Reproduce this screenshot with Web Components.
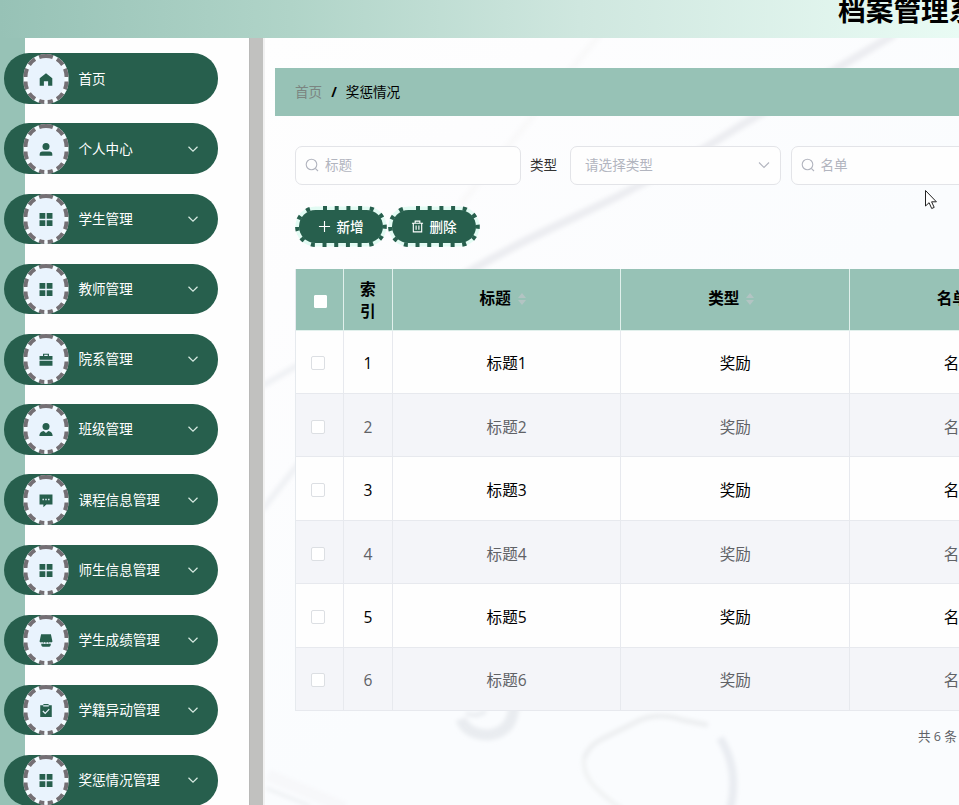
<!DOCTYPE html>
<html lang="zh-CN">
<head>
<meta charset="utf-8">
<title>档案管理系统</title>
<style>
  html, body {
    margin: 0;
    height: 805px;
    overflow: hidden;
  }
  body {
    font-family: "Open Sans", "Noto Sans CJK SC", sans-serif;
    background: #fff;
  }
</style>
</head>
<body>
<archive-app></archive-app>
<script>
  const ICONS = {
    home: '<path d="M8 .8 .8 6.600V15H5.600V10h4.800v5h4.800V6.600z"/>',
    user: '<circle cx="8" cy="4.6" r="4"/><path d="M.8 15v-1.600Q.8 10.400 4 10.400h8q3.200 0 3.200 3V15z"/>',
    grid: '<path d="M.6.6h6.600v6.600H.6zM8.800.6h6.600v6.600H8.800zM.6 8.800h6.600v6.600H.6zM8.800 8.800h6.600v6.600H8.800z"/>',
    case: '<path d="M4.6 4V1.5h6.8V4H15.400v4.400H.6V4zM6 4h4V2.700H6zM.6 9.500h14.800V15H.6z" fill-rule="evenodd"/>',
    avatar: '<circle cx="8" cy="4.6" r="4"/><path d="M.4 15.400c0-3.600 2-5.400 5-5.800L8 12l2.600-2.400c3 .4 5 2.200 5 5.800z"/>',
    comment: '<path fill-rule="evenodd" d="M.6 1.200h14.800v11.400H8.400L5 15.800v-3.200H.6zM4 6.100v1.600h1.600V6.100zm3.200 0v1.600h1.600V6.100zm3.200 0v1.600H12V6.100z"/>',
    shop: '<path d="M2.400.8h11.200L15.400 9q-1.200 2-3 .8-1.400 1.400-2.800 0-1.600 1.400-3.200 0-1.400 1.400-2.800 0Q1.800 11 .6 9zM2.400 11.700q1.400.4 2.400-.3 1.600 1 3.200 0 1.600 1 3.200 0 1 .7 2.400.3-.2 3.500-1.800 3.500H4.200q-1.600 0-1.800-3.500z"/>',
    check: '<path d="M1.400 2H5V.6h6V2h3.600v13.500H1.400z"/><path d="M4.800 2.700h6.400M4.400 8.600l2.700 2.700 4.600-4.800" fill="none" stroke="#e9f4fd" stroke-width="1.400"/>'
  };

  const MENU = [
    ['home', '首页'],
    ['user', '个人中心'],
    ['grid', '学生管理'],
    ['grid', '教师管理'],
    ['case', '院系管理'],
    ['avatar', '班级管理'],
    ['comment', '课程信息管理'],
    ['grid', '师生信息管理'],
    ['shop', '学生成绩管理'],
    ['check', '学籍异动管理'],
    ['grid', '奖惩情况管理']
  ];

  class MenuItem extends HTMLElement {
    constructor() {
      super();
      this.attachShadow({ mode: 'open' });
    }

    connectedCallback() {
      this.shadowRoot.innerHTML = `
        <style>
          :host {
            display: flex;
            align-items: center;
            box-sizing: border-box;
            flex: none;
            width: 214px;
            height: 50.5px;
            padding: 0 18px 0 19px;
            border-radius: 25px;
            background: #275f4d;
            color: #fff;
            font-size: 13.6px;
          }
          .badge { width: 46px; height: 50px; flex: none; }
          span { flex: 1; margin-left: 9px; line-height: 20px; white-space: nowrap; }
          .arrow { width: 14px; height: 14px; }
        </style>
        <svg class="badge" viewBox="0 0 46 50">
          <rect x=".5" y="0" width="45" height="50" rx="22.5" fill="#f5fbff"/>
          <rect x="4.5" y="4" width="37" height="42" rx="18.5" fill="#e9f3fd"/>
          <g fill="none" stroke="#746f74" stroke-width="4" stroke-dasharray="7 4.5 8 4.5 8.5 4.5 8 4.5 8 4.5 5.2 10">
            <path d="M23 2A20.5 20.5 0 0 1 43.500 22.500V27.500A20.500 20.500 0 0 1 23 48"/>
            <path d="M23 2A20.5 20.5 0 0 0 2.500 22.500V27.500A20.500 20.500 0 0 0 23 48"/>
          </g>
          <svg x="16" y="18.5" width="14" height="14" viewBox="0 0 16 16" fill="#275f4d">${ICONS[this.getAttribute('icon')]}</svg>
        </svg>
        <span><slot></slot></span>
        ${this.hasAttribute('leaf') ? '' : `
        <svg class="arrow" viewBox="0 0 14 14" fill="none" stroke="#d8ebe3" stroke-width="1.2">
          <path d="M2.500 4.800 7 9.200l4.500-4.400"/>
        </svg>`}
      `;
    }
  }

  class SideMenu extends HTMLElement {
    constructor() {
      super();
      this.attachShadow({ mode: 'open' });
      this.shadowRoot.innerHTML = `
        <style>
          :host {
            display: flex;
            flex-direction: column;
            gap: 19.7px;
            box-sizing: border-box;
            flex: none;
            width: 265px;
            padding: 15.3px 0 0 4.4px;
            overflow: hidden;
            background: linear-gradient(90deg, #97c2b6 25px, #fefefe 25px 249px, #b9b9b8 249px 250px, #c1c1bf 250px 263px, #f1f1f1 263px);
          }
        </style>
        ${MENU.map(([icon, text], i) => `<menu-item icon="${icon}" ${i ? '' : 'leaf'}>${text}</menu-item>`).join('')}
      `;
    }
  }

  class TopBar extends HTMLElement {
    constructor() {
      super();
      this.attachShadow({ mode: 'open' });
      this.shadowRoot.innerHTML = `
        <style>
          :host {
            display: flex;
            flex: none;
            height: 38px;
            overflow: hidden;
            background: linear-gradient(90deg, #97c2b6 0, #b0d4c8 290px, #cfe7df 580px, #e9fbf4 959px);
          }
          h1 {
            margin: -10px 0 0 838px;
            font-size: 27.7px;
            line-height: 40px;
            font-weight: 700;
            color: #000;
            white-space: nowrap;
          }
        </style>
        <h1><slot></slot></h1>
      `;
    }
  }

  class BreadCrumb extends HTMLElement {
    constructor() {
      super();
      this.attachShadow({ mode: 'open' });
      this.shadowRoot.innerHTML = `
        <style>
          :host {
            display: flex;
            align-items: center;
            height: 48px;
            margin: 30px 0 0 10px;
            padding-left: 20px;
            background: #97c2b6;
            font-size: 13.6px;
            line-height: 20px;
            color: #000;
          }
          .home { color: #7b8581; }
          b { margin: 0 9px; }
        </style>
        <span class="home">首页</span><b>/</b><span><slot></slot></span>
      `;
    }
  }

  class FilterField extends HTMLElement {
    constructor() {
      super();
      this.attachShadow({ mode: 'open' });
    }

    connectedCallback() {
      const select = this.hasAttribute('select');
      this.shadowRoot.innerHTML = `
        <style>
          :host {
            display: flex;
            align-items: center;
            box-sizing: border-box;
            flex: none;
            height: 39px;
            padding: 0 ${select ? '9px 2px 14px' : '9px 2px'};
            border: 1.5px solid #e3e4e8;
            border-radius: 7px;
            background: #fefefe;
            color: #b2b5bf;
            font-size: 13.6px;
          }
          span { flex: 1; line-height: 20px; }
          svg { width: 14px; height: 14px; fill: none; stroke: #b2b5bf; stroke-width: 1.1; }
          .search { margin-right: 6px; }
        </style>
        ${select ? '' : '<svg class="search" viewBox="0 0 14 14"><circle cx="6.5" cy="6.5" r="5.3"/><path d="m10.300 10.300 2.700 2.700"/></svg>'}
        <span><slot></slot></span>
        ${select ? '<svg viewBox="0 0 14 14"><path d="M2 4.500 7 9.500l5-5"/></svg>' : ''}
      `;
    }
  }

  class StitchButton extends HTMLElement {
    constructor() {
      super();
      this.attachShadow({ mode: 'open' });
    }

    connectedCallback() {
      const icon = this.getAttribute('icon') === 'plus'
        ? '<path d="M7 1v12M1 7h12"/>'
        : '<path d="M1 3.500h12M4.500 3.300V1.200h5v2.100M2.500 3.500v9.300h9V3.500M5.500 6v4.500M8.500 6v4.500"/>';
      this.shadowRoot.innerHTML = `
        <style>
          :host {
            display: grid;
            width: 92px;
            height: 41px;
            color: #fff;
            font-size: 13.6px;
            font-weight: 500;
          }
          .edge, .label { grid-area: 1 / 1; }
          .edge { width: 92px; height: 41px; }
          .label { display: flex; align-items: center; justify-content: center; gap: 5px; line-height: 20px; }
          .label svg { width: 13px; height: 13px; fill: none; stroke: #fff; stroke-width: 1.2; }
        </style>
        <svg class="edge" viewBox="0 0 92 41">
          <rect x=".5" y=".5" width="91" height="40" rx="20" fill="#e2fbf3"/>
          <rect x="4" y="4" width="84" height="33" rx="16.5" fill="#275f4d"/>
          <rect x="2.2" y="2.2" width="87.5" height="36.6" rx="18.3" fill="none" stroke="#275f4d" stroke-width="4.2" stroke-dasharray="4 7.7" stroke-dashoffset="-7.5"/>
        </svg>
        <span class="label"><svg viewBox="0 0 14 14">${icon}</svg><slot></slot></span>
      `;
    }
  }

  class RecordTable extends HTMLElement {
    constructor() {
      super();
      this.attachShadow({ mode: 'open' });
      this.rows = [1, 2, 3, 4, 5, 6];
    }

    connectedCallback() {
      this.render();
    }

    render() {
      const sort = '<svg viewBox="0 0 8 12"><path d="M0 5 4 0l4 5zM0 7l4 5 4-5z"/></svg>';
      this.shadowRoot.innerHTML = `
        <style>
          :host {
            display: block;
            width: 783.5px;
            border-left: 1px solid #e6eaee;
            font-size: 15.6px;
            color: #000;
          }
          .row {
            display: grid;
            grid-template-columns: 48px 48.8px 228.7px 228.5px 228.5px;
            height: 63.45px;
            background: #fefefe;
          }
          .row > div {
            display: flex;
            align-items: center;
            justify-content: center;
            box-sizing: border-box;
            border-right: 1px solid #e7e9ee;
            border-bottom: 1px solid #e7e9ee;
            line-height: 22px;
            padding-top: 3px;
          }
          .row.even { background: #f4f5f9; color: #606266; }
          .row.head { height: 61.5px; background: #97c2b6; font-weight: 700; }
          .row.head > div { border-color: #e1f0ec; padding: 0 8px 2px 0; }
          .row.head > .idx { padding: 2px 15px 0; text-align: center; }
          .row.head > .all { padding: 4px 0 0; }
          i {
            box-sizing: border-box;
            width: 14px;
            height: 14px;
            border: 1px solid #dcdfe3;
            border-radius: 2px;
            background: #fff;
            margin-right: 3px;
          }
          .head i { border-color: #fff; border-radius: 1px; width: 13px; height: 13px; margin: 1px 0 0 1px; }
          svg { width: 8px; height: 12px; margin: 1px 0 0 7px; fill: #b3c4c3; }
        </style>
        <div class="row head">
          <div class="all"><i></i></div>
          <div class="idx">索引</div>
          <div>标题${sort}</div>
          <div>类型${sort}</div>
          <div>名单${sort}</div>
        </div>
        ${this.rows.map(n => `
        <div class="row ${n % 2 ? '' : 'even'}">
          <div><i></i></div>
          <div>${n}</div>
          <div>标题${n}</div>
          <div>奖励</div>
          <div>名单${n}</div>
        </div>`).join('')}
      `;
    }
  }

  // faint pencil-and-numbers backdrop behind the content area
  class PaperBackdrop extends HTMLElement {
    constructor() {
      super();
      this.attachShadow({ mode: 'open' });
      this.shadowRoot.innerHTML = `
        <style>
          :host { position: absolute; inset: 0; z-index: -1; }
          svg { display: block; }
        </style>
        <svg width="694" height="767" viewBox="265 38 694 767" fill="none">
          <defs>
            <linearGradient id="bg" x1="0" y1="0" x2=".5" y2=".6">
              <stop offset="0" stop-color="#fefefe"/>
              <stop offset=".35" stop-color="#fdfdfe"/>
              <stop offset="1" stop-color="#fafcfe"/>
            </linearGradient>
            <filter id="soft" x="-10%" y="-10%" width="120%" height="120%"><feGaussianBlur stdDeviation="2"/></filter>
          </defs>
          <rect x="265" y="38" width="694" height="767" fill="url(#bg)"/>
          <g filter="url(#soft)">
            <path d="M895 34 740 126Q660 178 575 217T440 290" stroke="#ecedf1" stroke-width="8"/>
            <path d="M600 34 460 205" stroke="#f9f9fa" stroke-width="7"/>
            <path d="M262 386 300 364M262 510 300 462" stroke="#eff1f4" stroke-width="6"/>
            <path d="M268 775 345 808" stroke="#f7f8fa" stroke-width="12"/>
            <path d="M266 788 310 806" stroke="#e8eaed" stroke-width="2"/>
            <path d="M461 719Q466 734 488 735 512 733 514 706" stroke="#e9ecf0" stroke-width="11"/>
            <path d="M466 713Q476 718 486 711" stroke="#e9ecf0" stroke-width="4"/>
            <path d="M584 758Q590 744 604 738L640 720Q660 712 682 720L708 725" stroke="#eceef0" stroke-width="5"/>
            <path d="M720 738Q740 770 730 810" stroke="#e9ecf1" stroke-width="8"/>
            <path d="M584 758Q582 776 600 792T622 808" stroke="#eff1f2" stroke-width="4"/>
          </g>
        </svg>
      `;
    }
  }

  class ArchiveApp extends HTMLElement {
    constructor() {
      super();
      this.attachShadow({ mode: 'open' });
      this.shadowRoot.innerHTML = `
        <style>
          :host {
            display: flex;
            flex-direction: column;
            width: 959px;
            height: 805px;
            overflow: hidden;
          }
          .body { display: flex; flex: 1; min-height: 0; }
          main {
            position: relative;
            z-index: 0;
            flex: 1;
            min-width: 0;
            overflow: hidden;
          }
          .filters {
            display: flex;
            align-items: center;
            margin: 30px 0 0 30px;
            font-size: 13.6px;
            color: #333;
          }
          .filters label { flex: none; width: 30px; margin: -2px 10px 0 9px; line-height: 20px; }
          .actions { display: flex; gap: 1px; margin: 21px 0 22px 30px; }
          record-table { margin-left: 30px; }
          .total {
            margin: 16px 0 0 653px;
            font-size: 12.6px;
            line-height: 20px;
            color: #606266;
            white-space: nowrap;
          }
          .cursor { position: absolute; left: 659px; top: 151px; width: 14px; height: 21px; }
        </style>
        <top-bar>档案管理系统</top-bar>
        <div class="body">
          <side-menu></side-menu>
          <main>
            <paper-backdrop></paper-backdrop>
            <bread-crumb>奖惩情况</bread-crumb>
            <div class="filters">
              <filter-field style="width: 226px">标题</filter-field>
              <label>类型</label>
              <filter-field select style="width: 211px; margin-right: 9.5px">请选择类型</filter-field>
              <filter-field style="width: 226px">名单</filter-field>
            </div>
            <div class="actions">
              <stitch-button icon="plus">新增</stitch-button>
              <stitch-button icon="trash">删除</stitch-button>
            </div>
            <record-table></record-table>
            <div class="total">共 6 条</div>
            <svg class="cursor" viewBox="0 0 14 21">
              <path d="M1.500 1.500v15.500l3.600-3.300 2.600 5.800 2.500-1.100-2.600-5.600h4.800z" fill="#fff" stroke="#222" stroke-width="1"/>
            </svg>
          </main>
        </div>
      `;
    }
  }

  customElements.define('menu-item', MenuItem);
  customElements.define('side-menu', SideMenu);
  customElements.define('top-bar', TopBar);
  customElements.define('bread-crumb', BreadCrumb);
  customElements.define('filter-field', FilterField);
  customElements.define('stitch-button', StitchButton);
  customElements.define('record-table', RecordTable);
  customElements.define('paper-backdrop', PaperBackdrop);
  customElements.define('archive-app', ArchiveApp);
</script>
</body>
</html>
